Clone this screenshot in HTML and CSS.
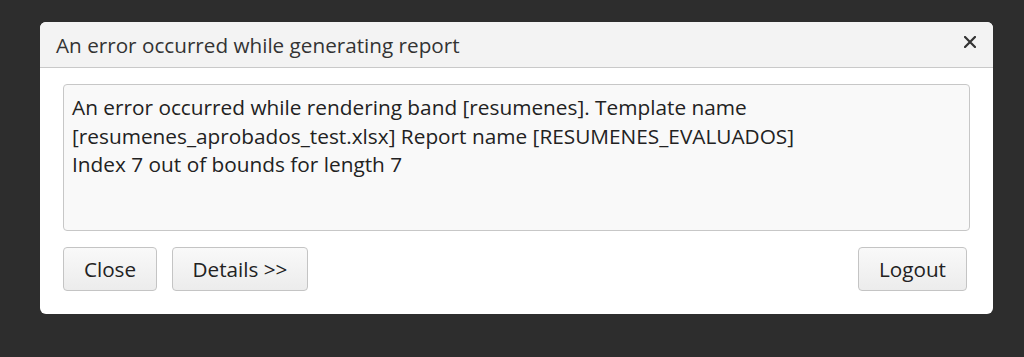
FILE: index.html
```html
<!DOCTYPE html>
<html>
<head>
<meta charset="utf-8">
<link rel="stylesheet" href="styles.css">
</head>
<body>
<div class="dialog">
  <div class="header">
    <span class="title">An error occurred while generating report</span>
    <svg class="close-x" width="12" height="12" viewBox="0 0 12 12"><path d="M1 1L11 11M11 1L1 11" stroke="#333" stroke-width="2.2" stroke-linecap="square" fill="none"/></svg>
  </div>
  <div class="content">
    <div class="message">An error occurred while rendering band [resumenes]. Template name [resumenes_aprobados_test.xlsx] Report name [RESUMENES_EVALUADOS]<br>Index 7 out of bounds for length 7</div>
    <div class="buttons">
      <button class="btn btn-close">Close</button>
      <button class="btn btn-details">Details &gt;&gt;</button>
      <span class="spacer"></span>
      <button class="btn btn-logout">Logout</button>
    </div>
  </div>
</div>
</body>
</html>
```
FILE: styles.css
```css
html, body {
  margin: 0;
  padding: 0;
  background: #2d2d2d;
  height: 100%;
}
body {
  padding: 22px 31px 0 40px;
  box-sizing: border-box;
  font-family: "Open Sans", "Liberation Sans", sans-serif;
  color: #222;
}
.dialog {
  width: 953px;
  background: #fff;
  border-radius: 6px;
  overflow: hidden;
}
.header {
  height: 45px;
  background: #f3f3f3;
  border-bottom: 1px solid #c9c9c9;
  display: flex;
  align-items: center;
  padding: 0 17px 0 16px;
}
.title {
  flex: 1;
  font-size: 20.7px;
  color: #333;
}
.close-x {
  margin-top: -5px;
}
.content {
  padding: 16px 23px 23px 23px;
}
.message {
  height: 147px;
  box-sizing: border-box;
  border: 1px solid #c7c7c7;
  border-radius: 4px;
  background: #f9f9f9;
  padding: 8px 8px 6px 8px;
  font-size: 20.8px;
  line-height: 28.5px;
  color: #222;
}
.buttons {
  display: flex;
  align-items: center;
  gap: 15px;
  margin-top: 16px;
  padding-right: 3px;
}
.spacer { flex: 1; }
.btn {
  height: 44px;
  box-sizing: border-box;
  border: 1px solid #c4c4c4;
  border-radius: 4px;
  background: linear-gradient(#f9f9f9, #ececec);
  font-family: "Open Sans", "Liberation Sans", sans-serif;
  font-size: 20.7px;
  color: #222;
  padding: 0;
}
.btn-close { width: 94px; }
.btn-details { width: 136px; }
.btn-logout { width: 109px; }
```
